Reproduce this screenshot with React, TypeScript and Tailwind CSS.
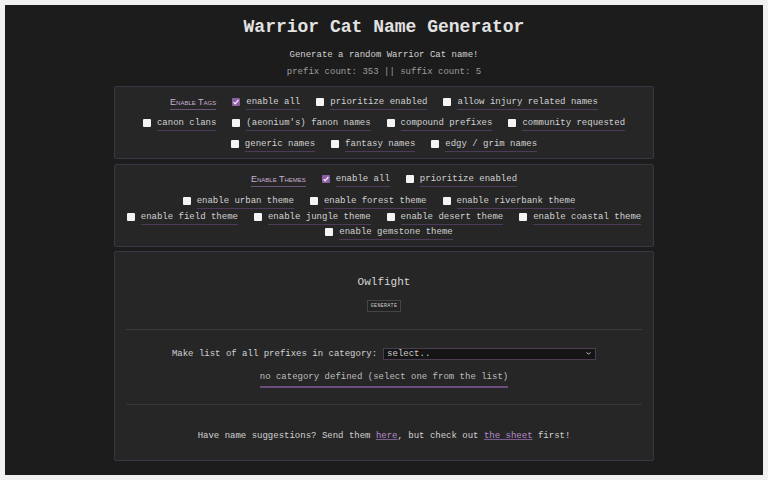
import React from 'react'

const mono = "font-['Liberation_Mono','DejaVu_Sans_Mono',monospace]"

const tagRows: string[][] = [
  ['canon clans', "(aeonium's) fanon names", 'compound prefixes', 'community requested'],
  ['generic names', 'fantasy names', 'edgy / grim names'],
]

// each theme row carries its own nudge, the wrapped lines don't sit on the exact centre
const themeRows: { items: string[]; nudge: string }[] = [
  { items: ['enable urban theme', 'enable forest theme', 'enable riverbank theme'], nudge: 'pr-[10px]' },
  { items: ['enable field theme', 'enable jungle theme', 'enable desert theme', 'enable coastal theme'], nudge: '' },
  { items: ['enable gemstone theme'], nudge: 'pl-[10px]' },
]

const Box: React.FC<{ checked?: boolean }> = ({ checked }) =>
  checked ? (
    <span className="mr-[6px] mt-[1px] inline-flex h-[8px] w-[8px] shrink-0 items-center justify-center rounded-[1px] bg-[#8c5fa3]">
      <svg viewBox="0 0 8 8" className="h-[8px] w-[8px]">
        <path d="M1.6 4.2 L3.2 5.8 L6.4 2" fill="none" stroke="#f2e8f7" strokeWidth="1.3" />
      </svg>
    </span>
  ) : (
    <span className="mr-[6px] mt-[1px] inline-block h-[8px] w-[8px] shrink-0 rounded-[1px] bg-[#f4f4f4]" />
  )

const Option: React.FC<{ label: string; checked?: boolean }> = ({ label, checked }) => (
  <label className="flex items-start pt-[2px]">
    <Box checked={checked} />
    <span className="border-b border-[#4e3a5a] pb-px leading-[11px]">{label}</span>
  </label>
)

const Heading: React.FC<{ text: string }> = ({ text }) => (
  <span className="mt-[2px] border-b border-[#6b5478] pb-px font-['Liberation_Sans',sans-serif] text-[9px] leading-[11px] text-[#c7b2d4] [font-variant:small-caps]">
    {text}
  </span>
)

export default function App() {
  return (
    <div className={`min-h-[480px] bg-[#f1f1f1] p-[5px] ${mono}`}>
      <div className="flex flex-col items-center bg-[#1c1c1c] pt-[10px] pb-[14px] text-[9px] text-[#d2d2d2]">
        <h1 className="text-[18px] font-bold leading-[24px] text-[#e2e2e2]">Warrior Cat Name Generator</h1>
        <p className="mt-[10px] leading-[12px]">Generate a random Warrior Cat name!</p>
        <p className="mt-[5px] leading-[12px] text-[#9d9d9d]">prefix count: 353 || suffix count: 5</p>

        {/* tag filters */}
        <section className="mt-[8px] w-[540px] rounded-[2px] border border-[#3a3540] bg-[#262626] pt-[5px] pb-[3px]">
          <div className="flex h-[21px] items-center justify-center gap-[16px]">
            <Heading text="Enable Tags" />
            <Option label="enable all" checked />
            <Option label="prioritize enabled" />
            <Option label="allow injury related names" />
          </div>
          {tagRows.map((row, i) => (
            <div key={i} className="flex h-[21px] items-center justify-center gap-[16px]">
              {row.map((t) => (
                <Option key={t} label={t} />
              ))}
            </div>
          ))}
        </section>

        {/* theme filters */}
        <section className="mt-[5px] w-[540px] rounded-[2px] border border-[#3a3540] bg-[#262626] pt-[4px] pb-[5px]">
          <div className="flex h-[20px] items-center justify-center gap-[16px]">
            <Heading text="Enable Themes" />
            <Option label="enable all" checked />
            <Option label="prioritize enabled" />
          </div>
          <div className="mt-[5px]">
            {themeRows.map((row, i) => (
              <div key={i} className={`flex h-[15.5px] items-center justify-center gap-[16px] ${row.nudge}`}>
                {row.items.map((t) => (
                  <Option key={t} label={t} />
                ))}
              </div>
            ))}
          </div>
        </section>

        {/* generator */}
        <section className="mt-[4px] flex h-[210px] w-[540px] flex-col items-center rounded-[2px] border border-[#3a3540] bg-[#262626] px-[11px]">
          <div className="mt-[22px] text-[11px] leading-[16px] text-[#d6d6d6]">Owlfight</div>
          <button className="mt-[10px] border border-[#454545] bg-[#222] px-[3px] text-[5px] leading-[10px] tracking-[0.3px] text-[#cfcfcf]">
            GENERATE
          </button>
          <hr className="mt-[17px] w-full border-t border-[#3c3c3c]" />
          <div className="mt-[18px] flex items-center gap-[6px]">
            <span className="leading-[12px]">Make list of all prefixes in category:</span>
            <div className="flex h-[12px] w-[213px] items-center justify-between border border-[#4a3d52] bg-[#151515] pl-[3px] pr-[4px] text-[#cdcdcd]">
              <span className="leading-[10px]">select..</span>
              <svg viewBox="0 0 6 4" className="h-[3px] w-[5px]">
                <path d="M0.5 0.5 L3 3 L5.5 0.5" fill="none" stroke="#ddd" strokeWidth="1.2" />
              </svg>
            </div>
          </div>
          <div className="mt-[11px] border-b-2 border-[#6c4d7c] pb-[3px] leading-[12px] text-[#bdbdbd]">
            no category defined (select one from the list)
          </div>
          <hr className="mt-[16px] w-full border-t border-[#363636]" />
          <p className="mt-[25px] leading-[12px]">
            Have name suggestions? Send them{' '}
            <a className="text-[#b48ccc] underline decoration-[#7d5d90]">here</a>, but check out{' '}
            <a className="text-[#b48ccc] underline decoration-[#7d5d90]">the sheet</a> first!
          </p>
        </section>
      </div>
    </div>
  )
}
